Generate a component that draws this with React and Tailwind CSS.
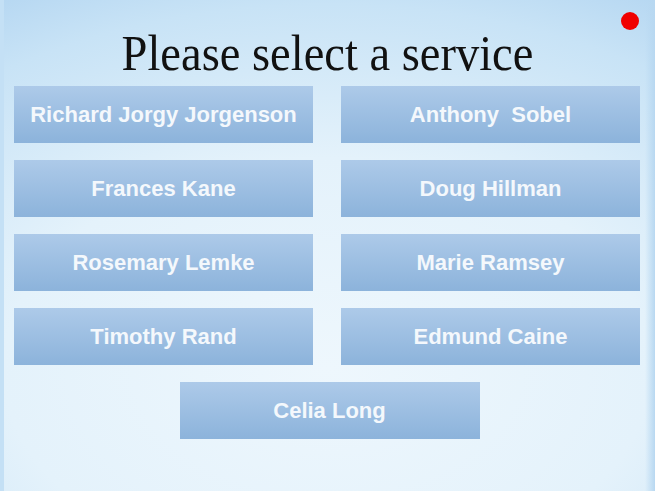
const people = [
  "Richard Jorgy Jorgenson",
  "Anthony  Sobel",
  "Frances Kane",
  "Doug Hillman",
  "Rosemary Lemke",
  "Marie Ramsey",
  "Timothy Rand",
  "Edmund Caine",
];

function ServiceButton({ name, className = "" }) {
  return (
    <button
      className={`h-[57px] flex items-center justify-center bg-gradient-to-b from-[#adcae9] to-[#8cb3db] text-[#f4f8fc] font-bold text-[22px] whitespace-pre ${className}`}
      style={{ fontFamily: '"Liberation Sans", Arial, sans-serif' }}
    >
      {name}
    </button>
  );
}

export default function App() {
  return (
    <div className="relative w-[655px] h-[491px] overflow-hidden bg-[radial-gradient(ellipse_110%_95%_at_50%_75%,#eef7fd_0%,#e4f2fb_45%,#c8e3f6_78%,#abd0ef_100%)]">
      <div className="absolute inset-y-0 right-0 w-[10px] bg-gradient-to-r from-transparent to-[#b8d8f1]" />
      <div className="absolute inset-y-0 left-0 w-[4px] bg-[#c4e0f5]" />
      <span className="absolute left-[621px] top-[12px] w-[18px] h-[18px] rounded-full bg-[#f00000]" />

      <div className="relative flex flex-col">
        <h1
          className="h-[86px] pt-[28px] text-center text-[50px] leading-[50px] text-[#111] scale-x-[0.93] origin-center"
          style={{ fontFamily: '"Liberation Serif", "Times New Roman", serif' }}
        >
          Please select a service
        </h1>
        <div className="grid grid-cols-2 gap-x-[28px] gap-y-[17px] px-[14px] pr-[15px]">
          {people.map((p) => (
            <ServiceButton key={p} name={p} />
          ))}
        </div>
        <div className="flex justify-center mt-[17px] pl-[4px]">
          <ServiceButton name="Celia Long" className="w-[300px]" />
        </div>
      </div>
    </div>
  );
}
